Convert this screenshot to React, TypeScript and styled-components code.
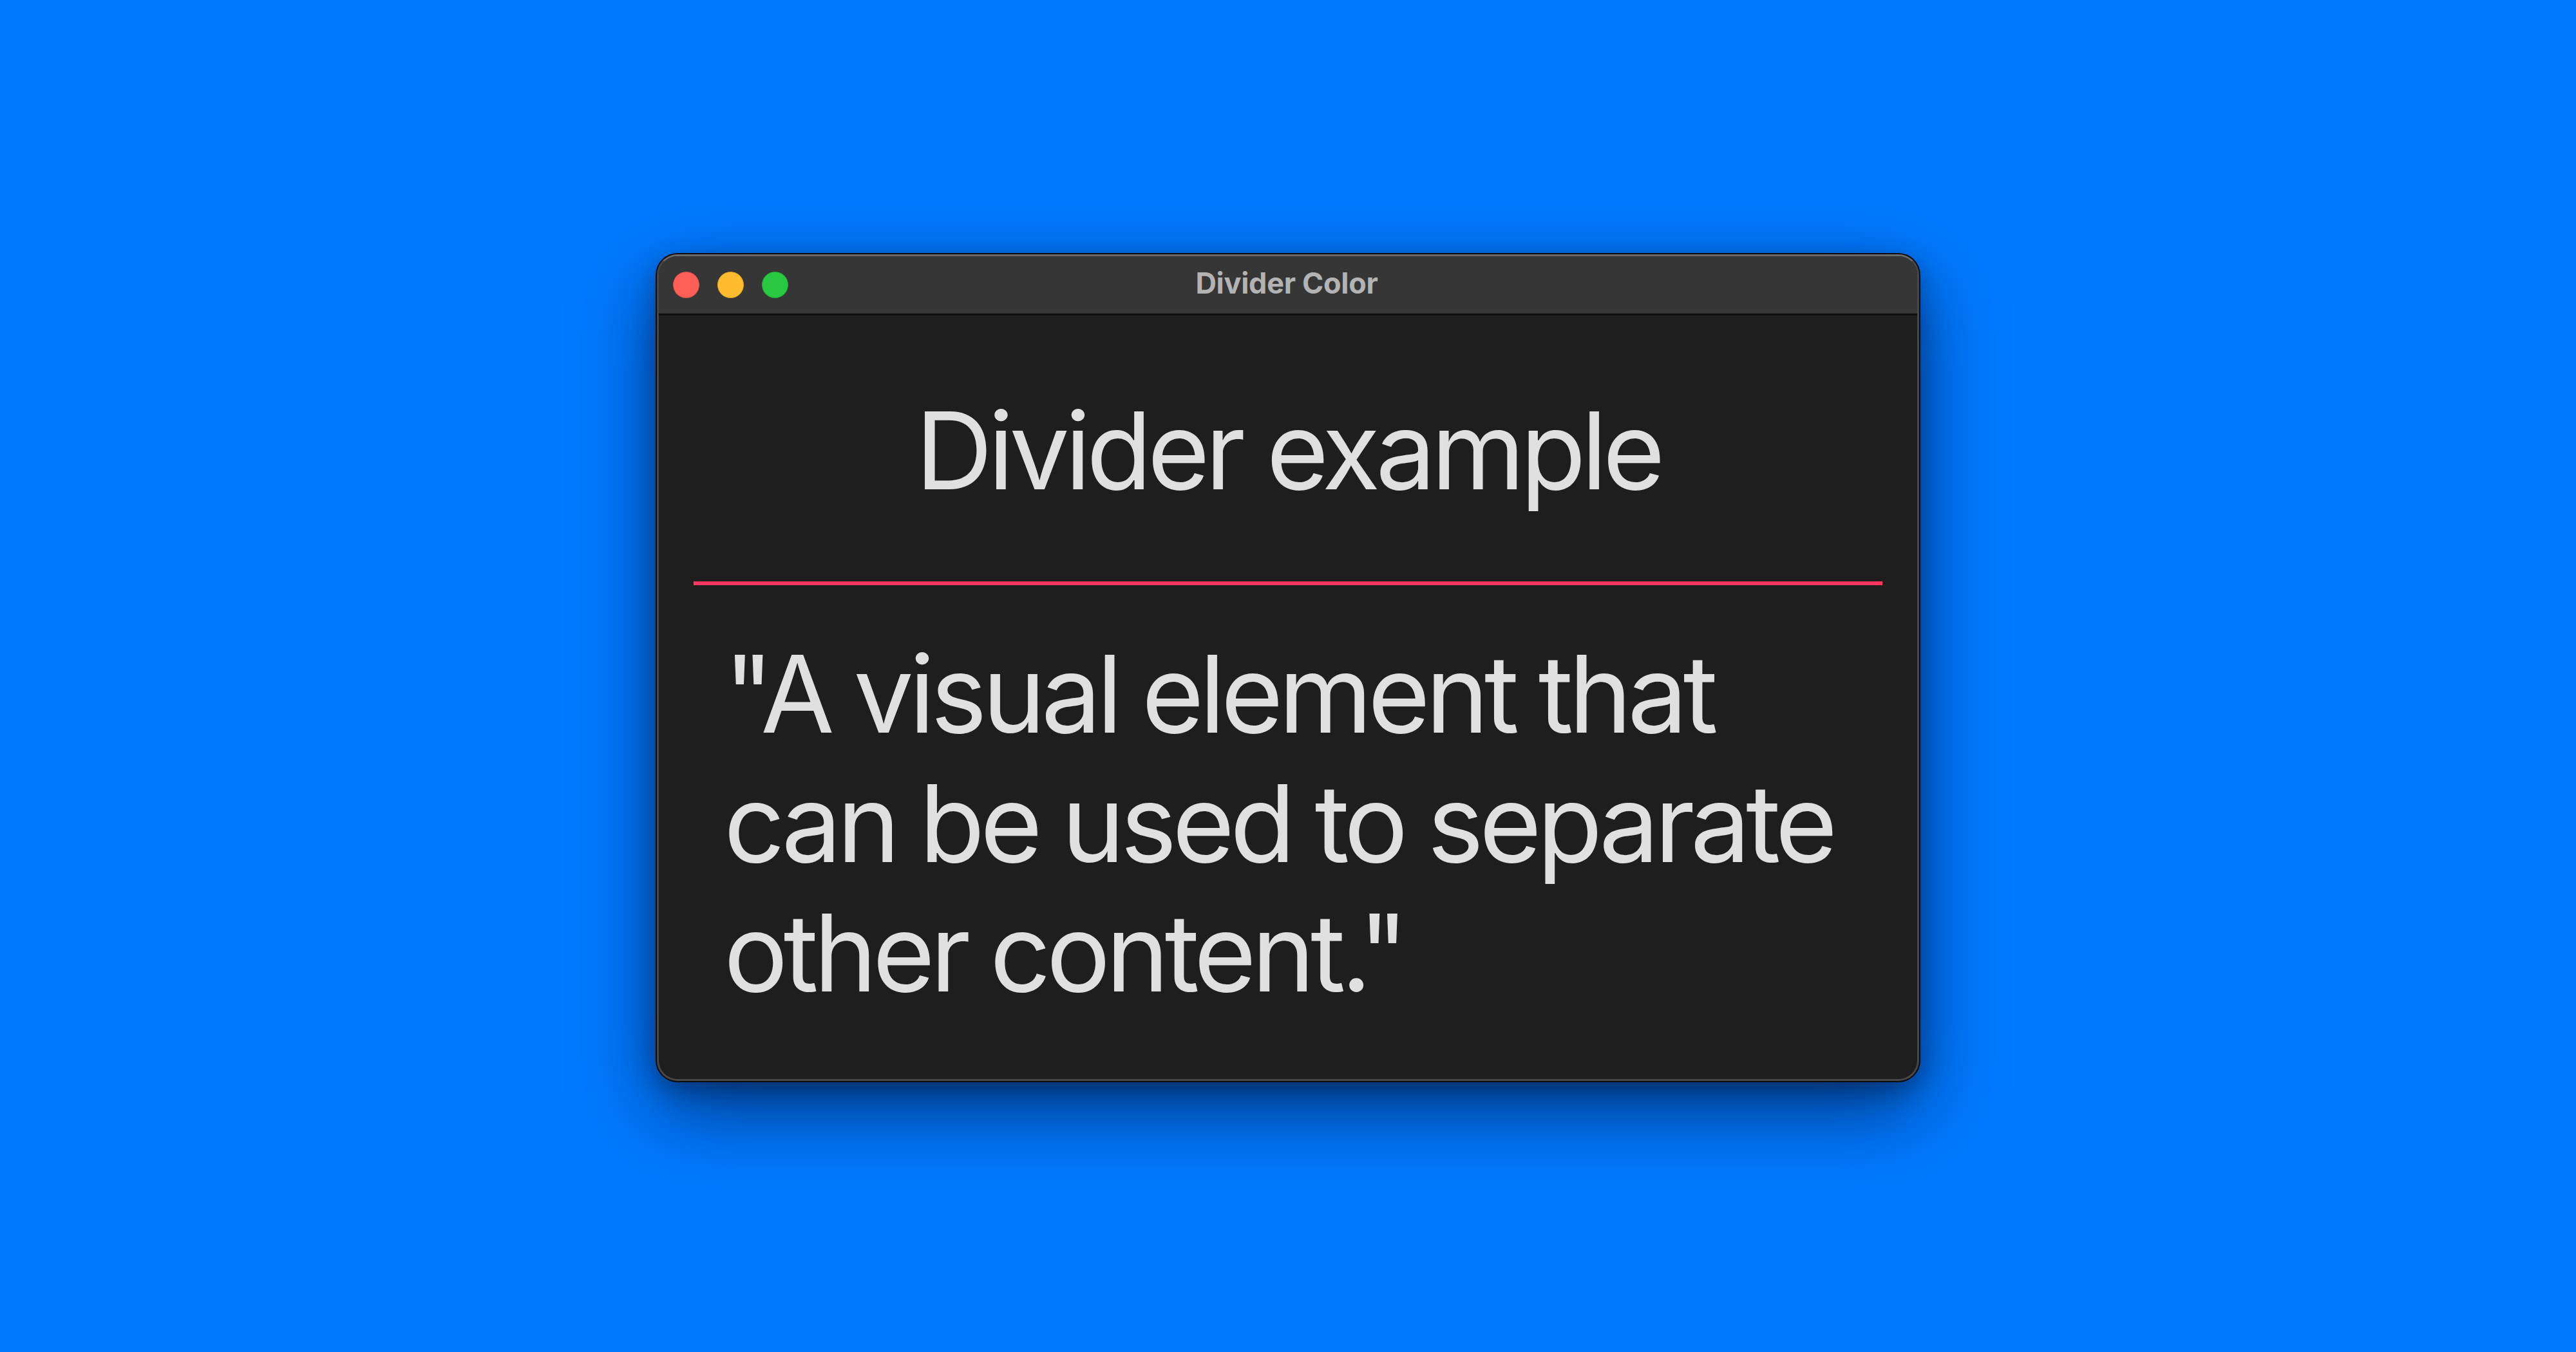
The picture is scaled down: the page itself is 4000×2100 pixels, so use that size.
import React from "react";
import styled, { createGlobalStyle } from "styled-components";

const GlobalStyle = createGlobalStyle`
  html, body {
    margin: 0;
    padding: 0;
    background: #007aff;
  }
  body {
    font-family: Inter, "Noto Sans", "Liberation Sans", sans-serif;
  }
`;

const Page = styled.main`
  width: 4000px;
  height: 2100px;
  box-sizing: border-box;
  padding-top: 395px;
  display: flex;
  justify-content: center;
  align-items: flex-start;
  background: #007aff;
`;

const Window = styled.section`
  width: 1960px;
  height: 1284px;
  box-sizing: border-box;
  display: flex;
  flex-direction: column;
  border-radius: 32px;
  overflow: hidden;
  background: #1e1e1e;
  border: 3px solid #474747;
  border-top-color: #6a6a6a;
  box-shadow: 0 0 0 2px #0c0c0c, 0 44px 120px rgba(0, 8, 40, 0.62),
    0 12px 36px rgba(0, 0, 0, 0.3);
`;

const TitleBar = styled.header`
  height: 89px;
  flex: none;
  display: grid;
  grid-template-columns: 1fr auto 1fr;
  align-items: center;
  padding: 0 22px;
  background: #363636;
  border-bottom: 3px solid #0f0f0f;
`;

const Lights = styled.div`
  display: flex;
  gap: 28px;
  align-items: center;
`;

const Light = styled.span<{ $color: string }>`
  width: 41px;
  height: 41px;
  border-radius: 50%;
  background: ${(p) => p.$color};
  box-shadow: inset 0 0 0 1px rgba(0, 0, 0, 0.12);
`;

const WindowTitle = styled.h1`
  margin: 0 0 6px;
  font-size: 45px;
  font-weight: 700;
  color: #b3b3b3;
  letter-spacing: -0.3px;
  transform: translateX(-2px);
`;

const Content = styled.div`
  flex: 1;
  display: flex;
  flex-direction: column;
  padding: 110px 54px 0;
  color: #e0e0e0;
`;

const Heading = styled.h2`
  margin: 0;
  font-size: 166px;
  font-weight: 400;
  line-height: 199px;
  text-align: center;
  letter-spacing: -7px;
`;

const Divider = styled.hr`
  margin: 104px 0 68px;
  height: 6px;
  border: 0;
  background: #ff375f;
`;

const Body = styled.p`
  margin: 0;
  padding-left: 47px;
  font-size: 166px;
  line-height: 201px;
  white-space: nowrap;
  letter-spacing: -7px;
  word-spacing: -3px;
`;

export default function App() {
  return (
    <>
      <GlobalStyle />
      <Page>
        <Window>
          <TitleBar>
            <Lights>
              <Light $color="#ff5f57" />
              <Light $color="#febc2e" />
              <Light $color="#28c840" />
            </Lights>
            <WindowTitle>Divider Color</WindowTitle>
            <div />
          </TitleBar>
          <Content>
            <Heading>Divider example</Heading>
            <Divider />
            <Body>
              "A visual element that
              <br />
              can be used to separate
              <br />
              other content."
            </Body>
          </Content>
        </Window>
      </Page>
    </>
  );
}
